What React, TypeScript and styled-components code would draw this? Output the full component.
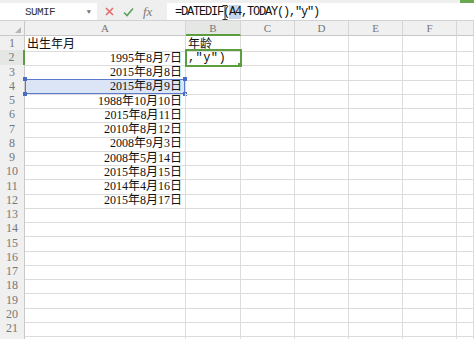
import styled, { createGlobalStyle } from 'styled-components';

const GlobalStyle = createGlobalStyle`
  html, body {
    margin: 0;
    padding: 0;
    background: #ffffff;
    overflow: hidden;
  }
  * {
    box-sizing: border-box;
  }
`;

const GREEN = '#5c9e3f';
const GRID = '#dcdcdc';
const HEAD_BORDER = '#c9c9c9';
const COLS = '25px 161px 55px 54px 54px 54px 54px 1fr';

const Page = styled.div`
  width: 100vw;
  height: 100vh;
  overflow: hidden;
  display: flex;
  flex-direction: column;
  font-family: 'Liberation Serif', 'Noto Sans CJK SC', serif;
`;

const FormulaBar = styled.div`
  height: 21px;
  flex: none;
  display: flex;
  flex-direction: column;
  background: #efefef;
  border-bottom: 1px solid #d2d2d2;
`;

const TopStrip = styled.div`
  height: 3px;
  display: flex;
  justify-content: flex-end;
`;

const GreenTab = styled.div`
  width: 14px;
  background: #6aa84f;
`;

const BarRow = styled.div`
  flex: 1;
  display: flex;
  align-items: stretch;
`;

const NameBox = styled.div`
  width: 97px;
  background: #ffffff;
  display: flex;
  align-items: center;
  padding-left: 25px;
  padding-right: 6px;
  font-family: 'Liberation Mono', monospace;
  font-size: 11px;
  letter-spacing: -0.6px;
  color: #333;
`;

const NameText = styled.span`
  flex: 1;
`;

const Arrow = styled.span`
  font-size: 7px;
  color: #777;
  letter-spacing: 0;
`;

const Tools = styled.div`
  width: 70px;
  display: flex;
  align-items: center;
  gap: 9px;
  padding-left: 8px;
`;

const Fx = styled.span`
  font-family: 'Liberation Serif', serif;
  font-style: italic;
  font-size: 13px;
  color: #7a7a7a;
`;

const FormulaInput = styled.div`
  position: relative;
  flex: 1;
  background: #ffffff;
  display: flex;
  align-items: center;
  padding-left: 8px;
  font-family: 'Liberation Mono', monospace;
  font-size: 12px;
  letter-spacing: -1.2px;
  color: #111;
  white-space: pre;
`;

const RefText = styled.span`
  background: #c6d6ef;
`;

const Cursor = styled.svg`
  position: absolute;
  left: 55px;
  top: 2px;
`;

const Sheet = styled.div`
  flex: 1;
  display: flex;
  flex-direction: column;
`;

const Row = styled.div<{ $head?: boolean }>`
  display: grid;
  grid-template-columns: ${COLS};
  height: ${(p) => (p.$head ? '15px' : '14.25px')};
  flex: none;
`;

const Corner = styled.div`
  position: relative;
  background: #eff0ef;
  border-right: 1px solid ${HEAD_BORDER};
  border-bottom: 1px solid ${HEAD_BORDER};
  display: flex;
  align-items: flex-end;
  justify-content: flex-end;
  padding: 0 3px 2px 0;
`;

const ColHead = styled.div<{ $active?: boolean }>`
  background: ${(p) => (p.$active ? '#e4e7e4' : '#eff0ef')};
  border-right: 1px solid #d6d6d6;
  border-bottom: ${(p) => (p.$active ? `2px solid ${GREEN}` : `1px solid ${HEAD_BORDER}`)};
  display: flex;
  align-items: center;
  justify-content: center;
  font-size: 11px;
  color: #777;
`;

const RowHead = styled.div<{ $active?: boolean }>`
  background: ${(p) => (p.$active ? '#e4e7e4' : '#eff0ef')};
  border-right: ${(p) => (p.$active ? `2px solid ${GREEN}` : `1px solid ${HEAD_BORDER}`)};
  border-bottom: 1px solid #d6d6d6;
  display: flex;
  align-items: center;
  justify-content: center;
  font-size: 12px;
  color: #777;
`;

const Cell = styled.div<{ $align?: 'left' | 'right'; $ref?: boolean; $active?: boolean }>`
  position: relative;
  border-right: 1px solid ${GRID};
  border-bottom: 1px solid ${GRID};
  display: flex;
  align-items: center;
  justify-content: ${(p) => (p.$align === 'right' ? 'flex-end' : 'flex-start')};
  padding: 0 3px 0 2px;
  font-size: 12px;
  line-height: 1;
  color: #111;
  white-space: nowrap;
  background: ${(p) => (p.$ref ? '#dbe5f6' : 'transparent')};
  ${(p) => (p.$ref ? 'box-shadow: inset 0 0 0 1px #5a7bcc;' : '')}
  ${(p) => (p.$active ? `outline: 2px solid ${GREEN}; outline-offset: -1px; z-index: 1;` : '')}
`;

const EditText = styled.span`
  font-family: 'Liberation Mono', monospace;
  font-size: 12px;
  letter-spacing: 0.4px;
`;

const Handle = styled.span<{ $v: 'top' | 'bottom'; $h: 'left' | 'right'; $color: string }>`
  position: absolute;
  width: 4px;
  height: 4px;
  background: ${(p) => p.$color};
  ${(p) => p.$v}: -2px;
  ${(p) => p.$h}: -2px;
`;

type RowData = { a?: string; b?: string };

const rows: RowData[] = [
  { a: '出生年月', b: '年龄' },
  { a: '1995年8月7日' },
  { a: '2015年8月8日' },
  { a: '2015年8月9日' },
  { a: '1988年10月10日' },
  { a: '2015年8月11日' },
  { a: '2010年8月12日' },
  { a: '2008年9月3日' },
  { a: '2008年5月14日' },
  { a: '2015年8月15日' },
  { a: '2014年4月16日' },
  { a: '2015年8月17日' },
  ...Array.from({ length: 10 }, () => ({})),
];

const columns = ['A', 'B', 'C', 'D', 'E', 'F', ''];

export default function App() {
  return (
    <>
      <GlobalStyle />
      <Page>
        <FormulaBar>
          <TopStrip>
            <GreenTab />
          </TopStrip>
          <BarRow>
            <NameBox>
              <NameText>SUMIF</NameText>
              <Arrow>▼</Arrow>
            </NameBox>
            <Tools>
              <svg width="9" height="9" viewBox="0 0 9 9">
                <path d="M1 1 L8 8 M8 1 L1 8" stroke="#e06c6c" strokeWidth="1.6" fill="none" />
              </svg>
              <svg width="11" height="10" viewBox="0 0 11 10">
                <path d="M1 5.5 L4 8.5 L10 1.5" stroke="#5aa05a" strokeWidth="1.6" fill="none" />
              </svg>
              <Fx>fx</Fx>
            </Tools>
            <FormulaInput>
              =DATEDIF(<RefText>A4</RefText>,TODAY(),"y")
              <Cursor width="6" height="15" viewBox="0 0 6 15">
                <path d="M0.5 0.5 H5.5 M3 0.5 V14.5 M0.5 14.5 H5.5" stroke="#333" strokeWidth="1" fill="none" />
              </Cursor>
            </FormulaInput>
          </BarRow>
        </FormulaBar>
        <Sheet>
          <Row $head>
            <Corner>
              <svg width="6" height="6" viewBox="0 0 6 6">
                <path d="M6 0 L6 6 L0 6 Z" fill="#b5b5b5" />
              </svg>
            </Corner>
            {columns.map((c, i) => (
              <ColHead key={i} $active={c === 'B'}>
                {c}
              </ColHead>
            ))}
          </Row>
          {rows.map((r, i) => {
            const n = i + 1;
            return (
              <Row key={n}>
                <RowHead $active={n === 2}>{n <= 21 ? n : ''}</RowHead>
                <Cell $align={n === 1 ? 'left' : 'right'} $ref={n === 4}>
                  {r.a}
                  {n === 4 && (
                    <>
                      <Handle $v="top" $h="left" $color="#4a6cc4" />
                      <Handle $v="top" $h="right" $color="#4a6cc4" />
                      <Handle $v="bottom" $h="left" $color="#4a6cc4" />
                      <Handle $v="bottom" $h="right" $color="#4a6cc4" />
                    </>
                  )}
                </Cell>
                <Cell $active={n === 2}>
                  {n === 2 ? <EditText>,"y")</EditText> : r.b}
                  {n === 2 && <Handle $v="bottom" $h="right" $color={GREEN} />}
                </Cell>
                <Cell />
                <Cell />
                <Cell />
                <Cell />
                <Cell />
              </Row>
            );
          })}
        </Sheet>
      </Page>
    </>
  );
}
